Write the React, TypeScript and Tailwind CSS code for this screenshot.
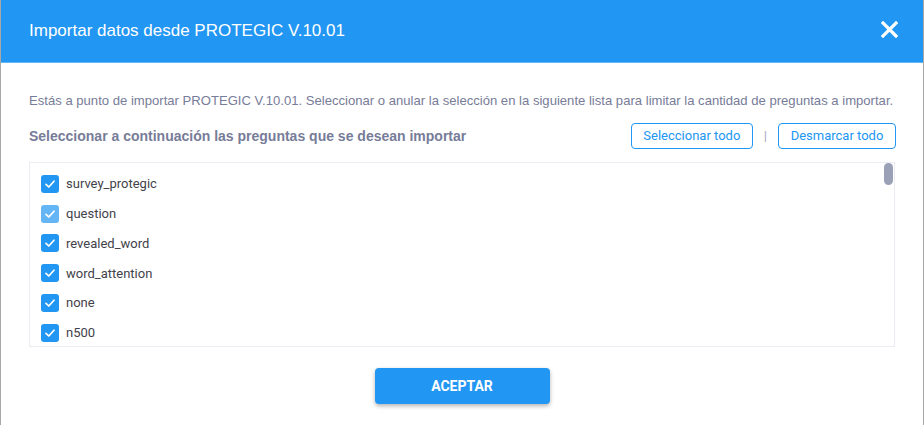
import React from "react";

const items: { label: string; light?: boolean }[] = [
  { label: "survey_protegic" },
  { label: "question", light: true },
  { label: "revealed_word" },
  { label: "word_attention" },
  { label: "none" },
  { label: "n500" },
];

function Check({ light }: { light?: boolean }) {
  return (
    <span
      className={`flex h-[18px] w-[18px] items-center justify-center rounded-[3px] ${
        light ? "bg-[#64b5f6]" : "bg-[#2196f3]"
      }`}
    >
      <svg width="12" height="12" viewBox="0 0 12 12" fill="none">
        <path d="M2 6.3 L4.8 9 L10 3.2" stroke="white" strokeWidth="1.7" strokeLinecap="round" strokeLinejoin="round" />
      </svg>
    </span>
  );
}

export default function App() {
  return (
    <div className="flex h-[425px] w-[924px] bg-[#a8a8a8]" style={{ fontFamily: "'Liberation Sans', Arial, sans-serif" }}>
      <div className="ml-[1px] flex h-full w-[922px] flex-col bg-white">
        <div className="flex h-[63px] items-center justify-between border-b border-[#64b5f6] bg-[#2196f3] pl-[28px] pr-[25px]">
          <span className="text-[17px] text-white">Importar datos desde PROTEGIC V.10.01</span>
          <svg width="17" height="17" viewBox="0 0 17 17" className="mb-[3px]">
            <path d="M2 2 L15 15 M15 2 L2 15" stroke="white" strokeWidth="3.2" strokeLinecap="square" />
          </svg>
        </div>
        <div className="flex flex-col px-[28px] pt-[30px]">
          <p className="whitespace-nowrap text-[13.1px] leading-[16px] text-[#777c98]">
            Estás a punto de importar PROTEGIC V.10.01. Seleccionar o anular la selección en la siguiente lista para limitar la cantidad de preguntas a importar.
          </p>
          <div className="mt-[14px] flex h-[26px] items-center justify-between">
            <span className="text-[14px] font-bold text-[#777c98]">
              Seleccionar a continuación las preguntas que se desean importar
            </span>
            <div className="flex items-center" style={{ fontFamily: "Roboto, sans-serif" }}>
              <button className="h-[26px] w-[122px] rounded-[4px] border border-[#2196f3] text-[13px] text-[#2196f3]">
                Seleccionar todo
              </button>
              <span className="mx-[11px] text-[13px] text-[#a0a4b8]">|</span>
              <button className="mr-[-1px] h-[26px] w-[118px] rounded-[4px] border border-[#2196f3] text-[13px] text-[#2196f3]">
                Desmarcar todo
              </button>
            </div>
          </div>
          <div
            className="relative mt-[13px] h-[185px] overflow-hidden border border-[#ebebf2] pl-[11px] pt-[6px]"
            style={{ fontFamily: "Roboto, sans-serif" }}
          >
            {items.map((it) => (
              <div key={it.label} className="flex h-[29.8px] items-center gap-[7px]">
                <Check light={it.light} />
                <span className="text-[13px] text-[#42424a]">{it.label}</span>
              </div>
            ))}
            <div className="absolute right-[1px] top-[0px] h-[22px] w-[9px] rounded-full bg-[#9aa1b7]" />
          </div>
          <div className="mt-[21px] flex justify-center">
            <button
              className="h-[36px] w-[175px] rounded-[4px] bg-[#2196f3] text-[14px] font-bold text-white shadow-[0_2px_4px_rgba(0,0,0,0.3)]"
              style={{ fontFamily: "Roboto, sans-serif" }}
            >
              ACEPTAR
            </button>
          </div>
        </div>
      </div>
    </div>
  );
}
